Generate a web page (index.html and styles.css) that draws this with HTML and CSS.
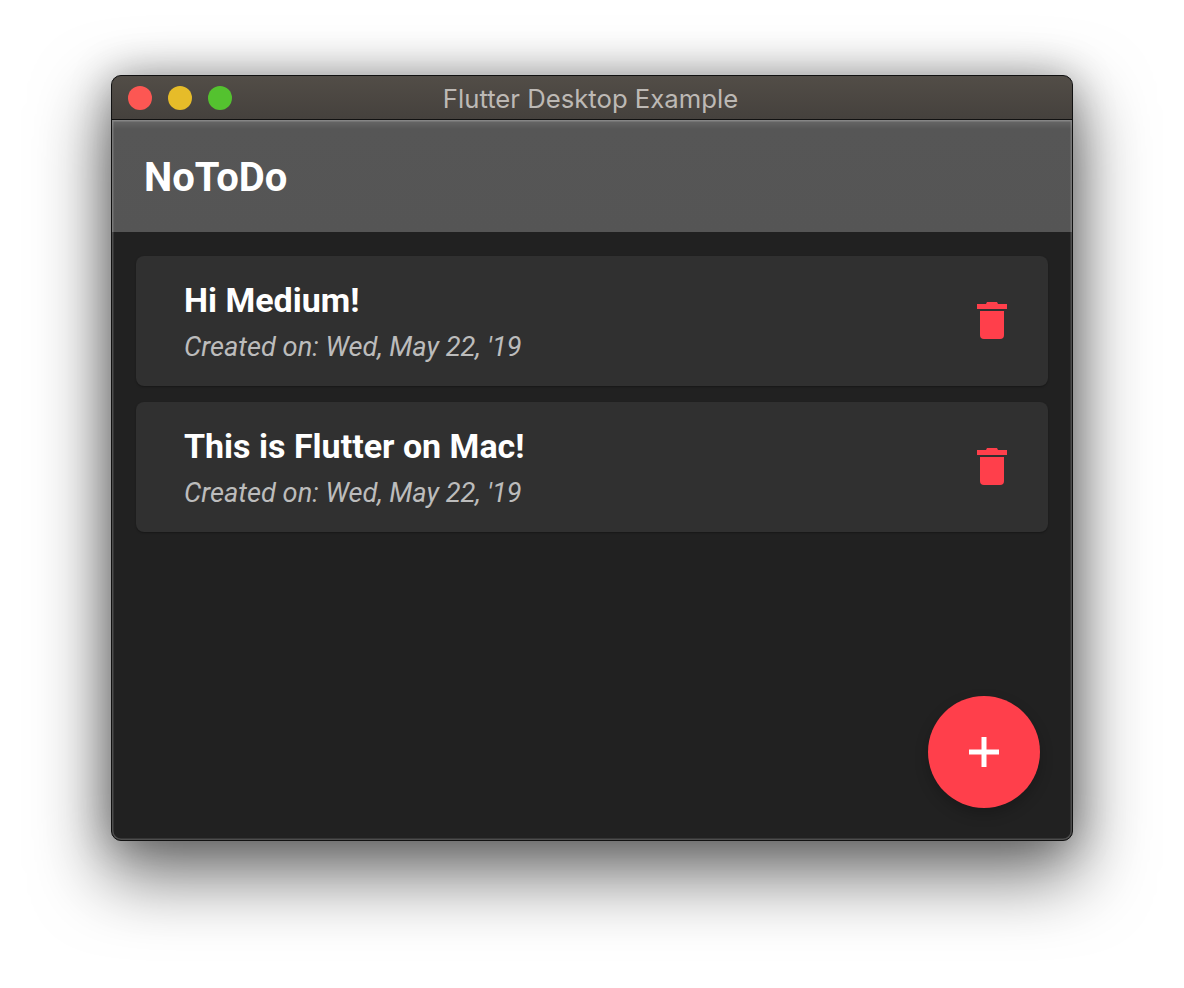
FILE: index.html
```html
<!DOCTYPE html>
<html lang="en">
<head>
  <meta charset="UTF-8">
  <title>Flutter Desktop Example</title>
  <link rel="stylesheet" href="styles.css">
</head>
<body>
  <div class="window">
    <div class="titlebar">
      <div class="lights">
        <span class="light red"></span>
        <span class="light yellow"></span>
        <span class="light green"></span>
      </div>
      <div class="window-title">Flutter Desktop Example</div>
    </div>

    <header class="app-bar">
      <h1>NoToDo</h1>
    </header>

    <main class="list">
      <div class="card">
        <div class="card-text">
          <h2>Hi Medium!</h2>
          <p>Created on: Wed, May 22, '19</p>
        </div>
        <svg class="trash" width="30" height="37" viewBox="0 0 30 37">
          <path d="M0 2h9l1-2h10l1 2h9v5H0z"/>
          <path d="M3 9h24v24a4 4 0 0 1-4 4H7a4 4 0 0 1-4-4z"/>
        </svg>
      </div>
      <div class="card">
        <div class="card-text">
          <h2>This is Flutter on Mac!</h2>
          <p>Created on: Wed, May 22, '19</p>
        </div>
        <svg class="trash" width="30" height="37" viewBox="0 0 30 37">
          <path d="M0 2h9l1-2h10l1 2h9v5H0z"/>
          <path d="M3 9h24v24a4 4 0 0 1-4 4H7a4 4 0 0 1-4-4z"/>
        </svg>
      </div>
    </main>

    <button class="fab">
      <svg width="30" height="30" viewBox="0 0 30 30">
        <path d="M12.500 0h5v12.500h12.500v5H17.500v12.500h-5V17.500H0v-5h12.500z"/>
      </svg>
    </button>
  </div>
</body>
</html>
```

FILE: styles.css
```css
body {
  margin: 0;
  height: 988px;
  overflow: hidden;
  background: #fff;
  font-family: Roboto, sans-serif;
}

.window {
  position: relative;
  box-sizing: border-box;
  width: 962px;
  height: 766px;
  margin: 75px auto 0;
  display: flex;
  flex-direction: column;
  background: #212121;
  border: 1px solid #111;
  border-radius: 10px;
  box-shadow: 0 30px 70px 6px rgba(0, 0, 0, 0.55), 0 0 40px rgba(0, 0, 0, 0.28);
}

/* light inner edge of the window frame */
.window::after {
  content: "";
  position: absolute;
  top: 44px;
  left: 0;
  right: 0;
  bottom: 0;
  border-radius: 0 0 9px 9px;
  box-shadow: inset 0 0 0 1.5px rgba(255, 255, 255, 0.2);
  pointer-events: none;
}

.titlebar {
  height: 43px;
  flex-shrink: 0;
  position: relative;
  display: flex;
  align-items: center;
  justify-content: center;
  background: linear-gradient(to bottom, #524d47, #45413d);
  border-bottom: 1px solid #111;
  border-radius: 9px 9px 0 0;
}

.lights {
  position: absolute;
  left: 16px;
  top: 10px;
  display: flex;
  gap: 16px;
}

.light {
  width: 24px;
  height: 24px;
  border-radius: 50%;
}

.red { background: #fc5753; }
.yellow { background: #e6bc29; }
.green { background: #54c22f; }

.window-title {
  margin: 1px 3px 0 0;
  color: #bdb9b5;
  font-family: Inter, sans-serif;
  font-size: 25.7px;
}

.app-bar {
  height: 112px;
  flex-shrink: 0;
  box-sizing: border-box;
  padding: 2px 0 0 32px;
  display: flex;
  align-items: center;
  background: linear-gradient(to bottom, #686868 0, #565656 9px, #555 100%);
}

h1 {
  margin: 0;
  color: #fff;
  font-size: 40px;
  font-weight: 700;
}

.list {
  padding: 24px 24px 0;
  display: flex;
  flex-direction: column;
  gap: 16px;
}

.card {
  height: 130px;
  box-sizing: border-box;
  padding: 0 41px 0 48px;
  display: flex;
  align-items: center;
  justify-content: space-between;
  background: #303030;
  border-radius: 8px;
  box-shadow: 0 1px 2px rgba(0, 0, 0, 0.3);
}

.card h2 {
  margin: 0 0 11px;
  color: #fff;
  font-size: 34px;
  font-weight: 700;
}

.card p {
  margin: 0;
  color: #bcbcbc;
  font-size: 27.25px;
  font-style: italic;
}

.trash {
  margin-bottom: 1px;
  fill: #ff3f4b;
}

.fab {
  position: absolute;
  right: 32px;
  bottom: 32px;
  width: 112px;
  height: 112px;
  padding: 0;
  border: none;
  border-radius: 50%;
  display: flex;
  align-items: center;
  justify-content: center;
  background: #ff3f4b;
  box-shadow: 0 6px 14px rgba(0, 0, 0, 0.22);
}

.fab svg {
  fill: #fff;
}
```
